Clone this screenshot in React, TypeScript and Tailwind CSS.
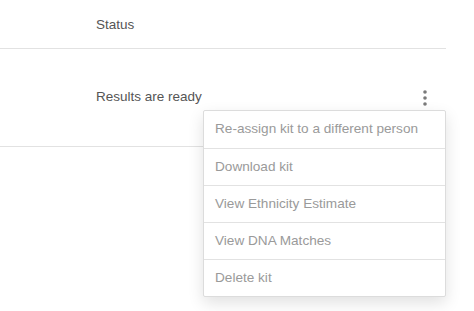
import React from 'react';

const menuItems = [
  'Re-assign kit to a different person',
  'Download kit',
  'View Ethnicity Estimate',
  'View DNA Matches',
  'Delete kit',
];

function KebabIcon() {
  return (
    <svg width="6" height="18" viewBox="0 0 6 18" aria-hidden="true">
      <circle cx="3" cy="3" r="1.8" fill="#7a7a7a" />
      <circle cx="3" cy="9" r="1.8" fill="#7a7a7a" />
      <circle cx="3" cy="15" r="1.8" fill="#7a7a7a" />
    </svg>
  );
}

export default function App() {
  return (
    <div
      className="w-[474px] h-[311px] bg-white overflow-hidden text-[13.5px] text-[#555]"
      style={{ fontFamily: '"Liberation Sans", Arial, sans-serif' }}
    >
      <div className="w-[446px]">
        {/* header */}
        <div className="h-[49px] border-b border-[#e2e2e2] flex items-center pl-[96px] pt-[2px]">
          Status
        </div>

        {/* kit row */}
        <div className="relative h-[98px] border-b border-[#e2e2e2] flex items-center pl-[96px] pr-[18px]">
          <span className="flex-1">Results are ready</span>
          <button className="flex items-center justify-center">
            <KebabIcon />
          </button>

          {/* dropdown */}
          <div className="absolute left-[203px] top-[61px] w-[243px] bg-white border border-[#dcdcdc] rounded-[2px] shadow-[0_6px_16px_rgba(0,0,0,0.12)] z-10">
            {menuItems.map((item, i) => (
              <div
                key={item}
                className={`h-[37px] flex items-center px-[11px] text-[13.6px] text-[#9a9a9a] ${i > 0 ? 'border-t border-[#e2e2e2]' : ''}`}
              >
                {item}
              </div>
            ))}
          </div>
        </div>
      </div>
    </div>
  );
}
